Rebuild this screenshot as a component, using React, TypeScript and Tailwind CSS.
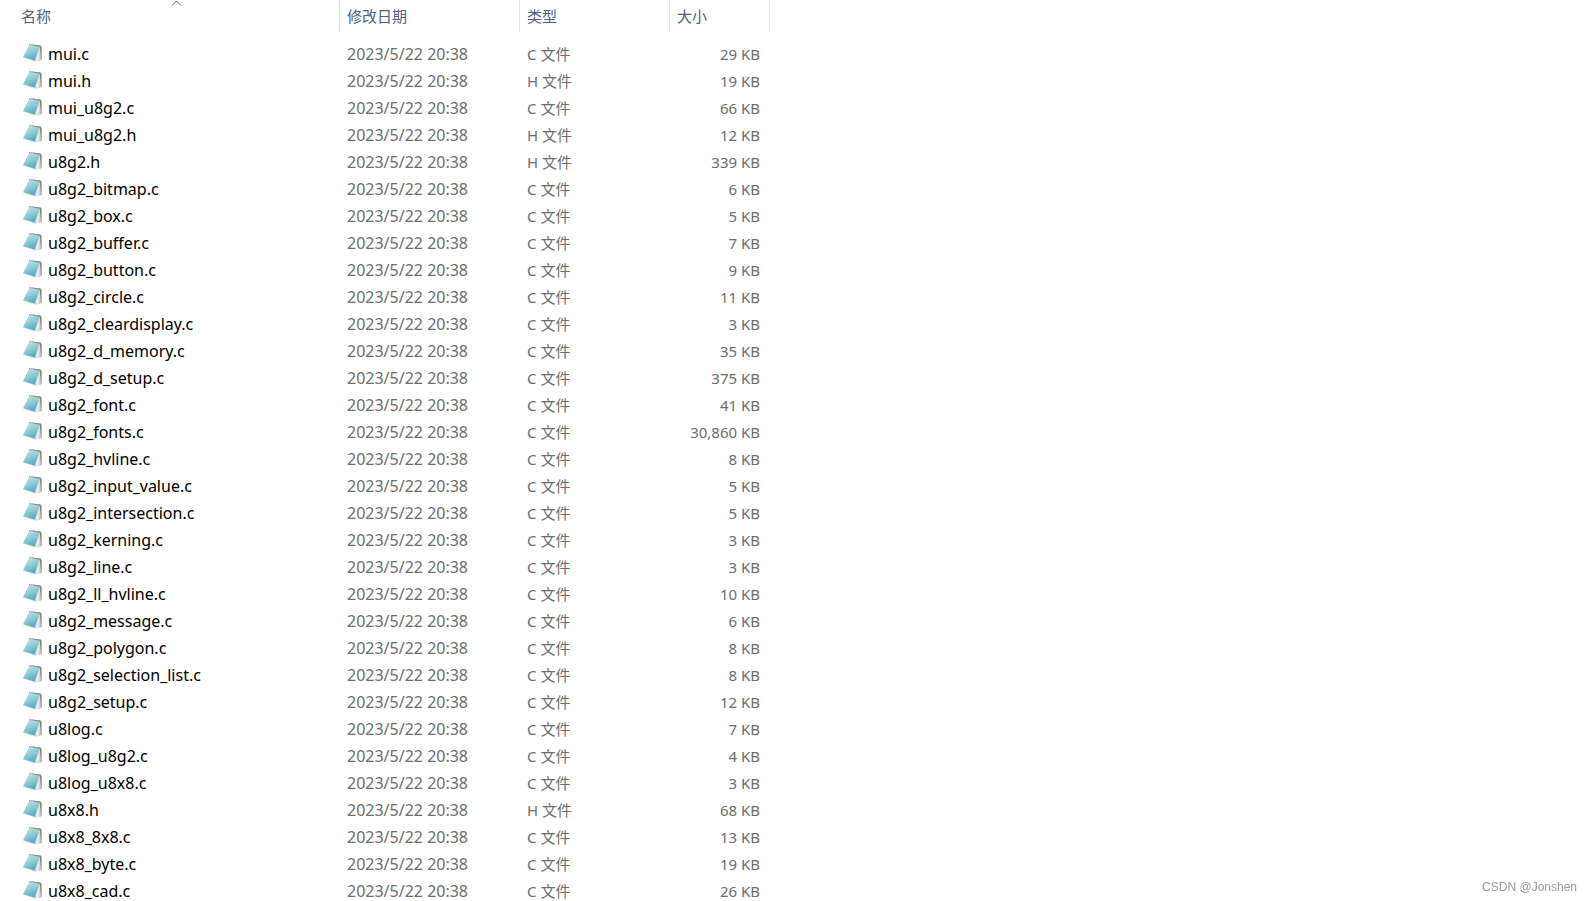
import React from 'react';

type FileRow = [name: string, size: string];

const MODIFIED = '2023/5/22 20:38';

const files: FileRow[] = [
  ['mui.c', '29'],
  ['mui.h', '19'],
  ['mui_u8g2.c', '66'],
  ['mui_u8g2.h', '12'],
  ['u8g2.h', '339'],
  ['u8g2_bitmap.c', '6'],
  ['u8g2_box.c', '5'],
  ['u8g2_buffer.c', '7'],
  ['u8g2_button.c', '9'],
  ['u8g2_circle.c', '11'],
  ['u8g2_cleardisplay.c', '3'],
  ['u8g2_d_memory.c', '35'],
  ['u8g2_d_setup.c', '375'],
  ['u8g2_font.c', '41'],
  ['u8g2_fonts.c', '30,860'],
  ['u8g2_hvline.c', '8'],
  ['u8g2_input_value.c', '5'],
  ['u8g2_intersection.c', '5'],
  ['u8g2_kerning.c', '3'],
  ['u8g2_line.c', '3'],
  ['u8g2_ll_hvline.c', '10'],
  ['u8g2_message.c', '6'],
  ['u8g2_polygon.c', '8'],
  ['u8g2_selection_list.c', '8'],
  ['u8g2_setup.c', '12'],
  ['u8log.c', '7'],
  ['u8log_u8g2.c', '4'],
  ['u8log_u8x8.c', '3'],
  ['u8x8.h', '68'],
  ['u8x8_8x8.c', '13'],
  ['u8x8_byte.c', '19'],
  ['u8x8_cad.c', '26'],
];

const NotepadIcon = () => (
  <svg className="w-5 h-5 mb-0.5 shrink-0" viewBox="0 0 20 20" aria-hidden="true">
    {/* Back cover */}
    <path d="M8 1.2 18.6 2.4 19.6 4v12.4L17.5 18.2 16 4z" fill="#8d8168" />
    {/* Pages */}
    <path d="M17.8 3.4 18.6 17 15.4 18.8 11.8 17.6z" fill="#e4e9ed" />
    <path d="M17.8 3.4 18.6 17 17.2 17.6z" fill="#c3c8cc" />
    <path d="M1 14.6 14 18.8 14 17z" fill="#c9d6da" />
    {/* Front cover */}
    <path d="M7 2.2 17.8 3.6 12.8 17.4 1 14.2z" fill="url(#cover)" />
    {/* Binding */}
    <path d="M7 1.7 18.2 3.1" stroke="#8f9a9c" strokeWidth="1.2" strokeDasharray="1.2 0.5" />
  </svg>
);

const App = () => {
  return (
    <main className="h-screen overflow-hidden bg-white font-['Noto_Sans','Noto_Sans_CJK_SC',sans-serif]">
      {/* Shared gradient for the file icons */}
      <svg className="absolute w-0 h-0" aria-hidden="true">
        <defs>
          <linearGradient id="cover" x1="0.2" y1="0" x2="0.7" y2="1">
            <stop offset="0" stopColor="#c3e2e9" />
            <stop offset="0.5" stopColor="#8ac8d5" />
            <stop offset="1" stopColor="#4aa5b9" />
          </linearGradient>
        </defs>
      </svg>

      <table className="table-fixed w-full border-separate border-spacing-0 whitespace-nowrap text-[#6d6d6d]">
        <colgroup>
          <col className="w-[340px]" />
          <col className="w-[180px]" />
          <col className="w-[150px]" />
          <col className="w-[100px]" />
          <col />
        </colgroup>
        <thead>
          <tr className="h-8 text-left text-[15px] leading-5 text-[#4c607a]">
            <th className="relative p-0 pl-[21px] border-r border-[#e5e5e5] font-normal" aria-sort="ascending">
              名称
              <svg className="absolute top-0 left-[171px] w-[11px] h-[7px]" viewBox="0 0 11 7" fill="none" aria-hidden="true">
                <path d="M1 5.5 5.5 1 10 5.5" stroke="#606060" />
              </svg>
            </th>
            <th className="p-0 pl-[7px] border-r border-[#e5e5e5] font-normal">修改日期</th>
            <th className="p-0 pl-[7px] border-r border-[#e5e5e5] font-normal">类型</th>
            <th className="p-0 pl-[7px] border-r border-[#e5e5e5] font-normal">大小</th>
            <td />
          </tr>
          <tr className="h-2" />
        </thead>
        <tbody>
          {files.map(([name, size]) => (
            <tr key={name} className="h-[27px] text-[15px] leading-5">
              <td className="p-0 pl-[22px]">
                <div className="flex items-center gap-[6px] text-base leading-5 text-black">
                  <NotepadIcon />
                  <span>{name}</span>
                </div>
              </td>
              <td className="p-0 pl-[7px] text-base leading-5">{MODIFIED}</td>
              <td className="p-0 pl-[7px]">{name.endsWith('.h') ? 'H' : 'C'} 文件</td>
              <td className="p-0 pr-[10px] text-right">{size} KB</td>
              <td />
            </tr>
          ))}
        </tbody>
      </table>

      <span className="fixed right-4 bottom-[6px] font-['Liberation_Sans',sans-serif] text-xs leading-4 text-[#999999]">
        CSDN @Jonshen
      </span>
    </main>
  );
};

export default App;
